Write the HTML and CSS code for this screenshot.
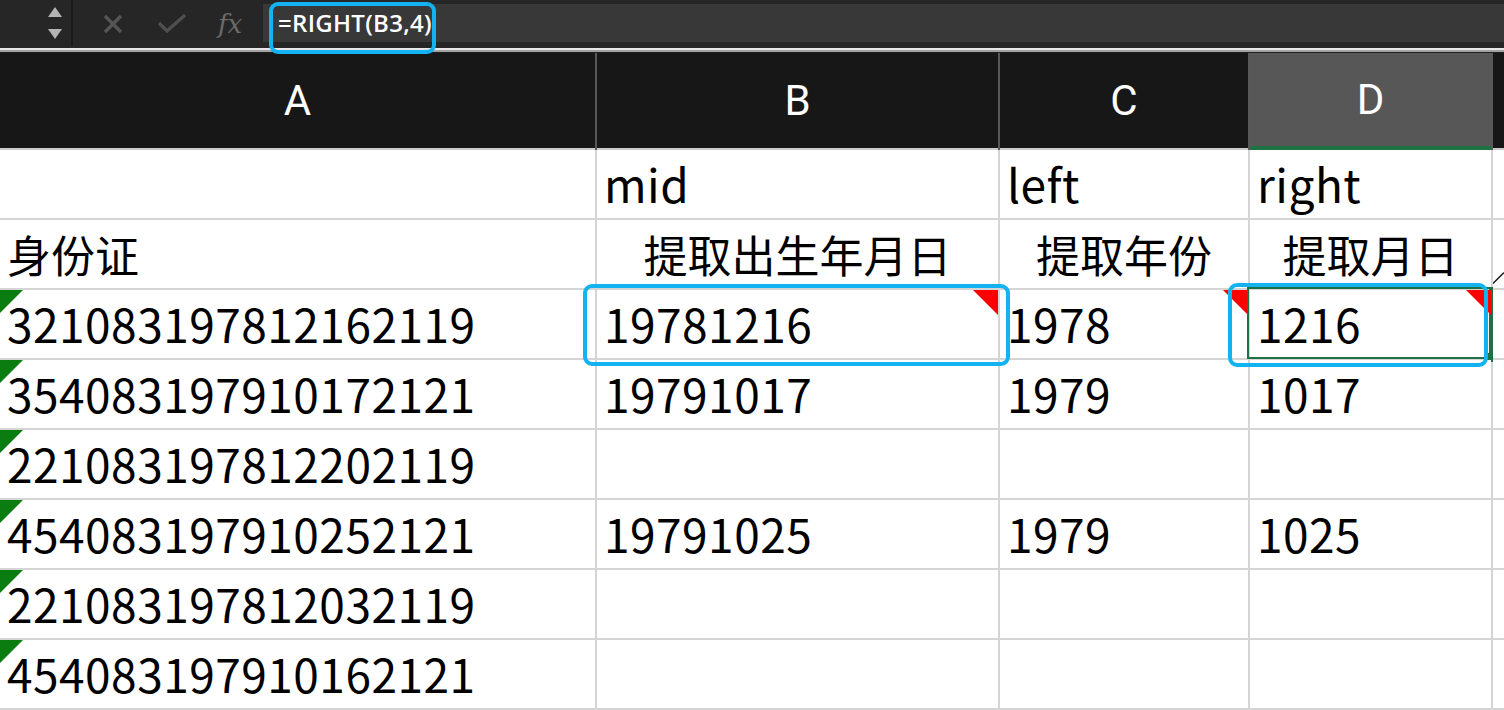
FILE: index.html
```html
<!DOCTYPE html>
<html lang="zh">

<head>
    <meta charset="utf-8">
    <title>身份证提取</title>
    <link rel="stylesheet" href="styles.css">
</head>

<body>
    <header class="toolbar">
        <div class="namebox">
            <svg width="71" height="46" viewBox="0 0 71 46">
                <polygon points="48,17 55,7 62,17" fill="#b4b4b4" />
                <polygon points="48,29 62,29 55,39" fill="#b4b4b4" />
            </svg>
        </div>
        <div class="tools">
            <svg class="cancel" width="20" height="20" viewBox="0 0 20 20">
                <path d="M2 2 L18 18 M18 2 L2 18" stroke="#555" stroke-width="3.2" />
            </svg>
            <svg class="enter" width="28" height="20" viewBox="0 0 28 20">
                <polyline points="1,9 9,17 27,1" fill="none" stroke="#4e4e4e" stroke-width="3.4" />
            </svg>
            <span class="fx">fx</span>
        </div>
        <div class="formula">=RIGHT(B3,4)<span class="mark"></span></div>
    </header>
    <div class="rule"></div>

    <div class="colhead">
        <div>A</div>
        <div>B</div>
        <div>C</div>
        <div class="current">D</div>
        <div></div>
    </div>

    <main class="grid">
        <!-- 1 -->
        <div></div>
        <div>mid</div>
        <div>left</div>
        <div>right</div>
        <div></div>
        <!-- 2 -->
        <div class="zh">身份证</div>
        <div class="zh center">提取出生年月日</div>
        <div class="zh center">提取年份</div>
        <div class="zh center">提取月日</div>
        <div></div>
        <!-- 3 -->
        <div class="err">321083197812162119</div>
        <div class="note">19781216<span class="mark mark-b"></span></div>
        <div class="note">1978</div>
        <div class="note">1216<span class="selection"><i class="handle"></i></span><span class="mark mark-d"></span></div>
        <div><svg class="leader" width="11" height="12" viewBox="0 0 11 12"><line x1="0" y1="11.5" x2="11" y2="0.5" stroke="#111" stroke-width="1.3" /></svg></div>
        <!-- 4 -->
        <div class="err">354083197910172121</div>
        <div>19791017</div>
        <div>1979</div>
        <div>1017</div>
        <div></div>
        <!-- 5 -->
        <div class="err">221083197812202119</div>
        <div></div>
        <div></div>
        <div></div>
        <div></div>
        <!-- 6 -->
        <div class="err">454083197910252121</div>
        <div>19791025</div>
        <div>1979</div>
        <div>1025</div>
        <div></div>
        <!-- 7 -->
        <div class="err">221083197812032119</div>
        <div></div>
        <div></div>
        <div></div>
        <div></div>
        <!-- 8 -->
        <div class="err">454083197910162121</div>
        <div></div>
        <div></div>
        <div></div>
        <div></div>
    </main>
</body>

</html>
```

FILE: styles.css
```css
* {
    margin: 0;
    padding: 0;
    box-sizing: border-box;
}

body {
    width: 1504px;
    height: 710px;
    overflow: hidden;
    background-color: #fff;
    font-family: "Noto Sans CJK SC", sans-serif;
}

/* formula bar */
.toolbar {
    display: flex;
    height: 48px;
    background-color: #262626;
}

.namebox {
    width: 73px;
    height: 46px;
    border-right: 2px solid #1a1a1a;
}

.namebox svg {
    display: block;
}

.tools {
    width: 190px;
    display: flex;
    align-items: center;
    padding-bottom: 1px;
}

.cancel {
    margin-left: 30px;
}

.enter {
    margin-left: 35px;
}

.fx {
    margin-left: 32px;
    font-family: "DejaVu Serif", serif;
    font-style: italic;
    font-size: 26px;
    color: #6a6a6a;
    line-height: 1;
}

.formula {
    position: relative;
    flex: 1;
    margin: 4px 0 6px;
    padding-left: 15px;
    background-color: #383838;
    color: #fff;
    font-family: "Open Sans", sans-serif;
    font-weight: 600;
    font-size: 24px;
    letter-spacing: 0.3px;
    line-height: 38px;
}

.rule {
    height: 5px;
    border-top: 2px solid #e6e6e6;
    border-bottom: 1px solid #1e1e1e;
    background-color: #a2a2a2;
}

/* column letters */
.colhead,
.grid {
    display: grid;
    grid-template-columns: 595px 401px 248px 241px 1fr;
    column-gap: 2px;
}

.colhead {
    height: 97px;
    background-color: #585858;
}

.colhead div {
    background-color: #171717;
    border-bottom: 2px solid #cdcdcd;
    color: #fff;
    font-family: Roboto, sans-serif;
    font-size: 42px;
    line-height: 95px;
    text-align: center;
}

.colhead .current {
    background-color: #575757;
    border-bottom: 4px solid #1f7244;
    line-height: 93px;
}

/* cells */
.grid {
    grid-auto-rows: 68px;
    row-gap: 2px;
    padding-bottom: 2px;
    background-color: #d5d5d5;
}

.grid > div {
    position: relative;
    background-color: #fff;
    color: #000;
    font-size: 46px;
    letter-spacing: 0.5px;
    line-height: 66px;
    padding-left: 7px;
    white-space: nowrap;
}

.grid > .zh {
    font-size: 44px;
    letter-spacing: 0;
    line-height: 68px;
}

.grid > .center {
    padding-left: 0;
    text-align: center;
}

.err::before {
    content: "";
    position: absolute;
    left: 0;
    top: 0;
    width: 23px;
    height: 23px;
    background-color: #0b7d10;
    clip-path: polygon(0 0, 100% 0, 0 100%);
}

.note::after {
    content: "";
    position: absolute;
    right: 0;
    top: 0;
    width: 25px;
    height: 25px;
    background-color: #ff0000;
    clip-path: polygon(0 0, 100% 0, 100% 100%);
}

.selection {
    position: absolute;
    left: -3px;
    top: -3px;
    right: -2px;
    bottom: -1px;
    border: 2px solid #1f7145;
    border-right-width: 4px;
}

.handle {
    position: absolute;
    right: -4px;
    bottom: -5px;
    width: 8px;
    height: 9px;
    background-color: #1f7145;
}

.leader {
    position: absolute;
    left: 0;
    top: -18px;
}

/* blue call-out frames */
.mark {
    position: absolute;
    z-index: 2;
    border: 4px solid #12b3f0;
    border-radius: 9px;
}

.formula .mark {
    left: 6px;
    top: -2px;
    width: 167px;
    height: 52px;
}

.mark-b {
    left: -14px;
    top: -6px;
    right: -12px;
    bottom: -8px;
}

.mark-d {
    left: -22px;
    top: -7px;
    right: 3px;
    bottom: -9px;
}
```
